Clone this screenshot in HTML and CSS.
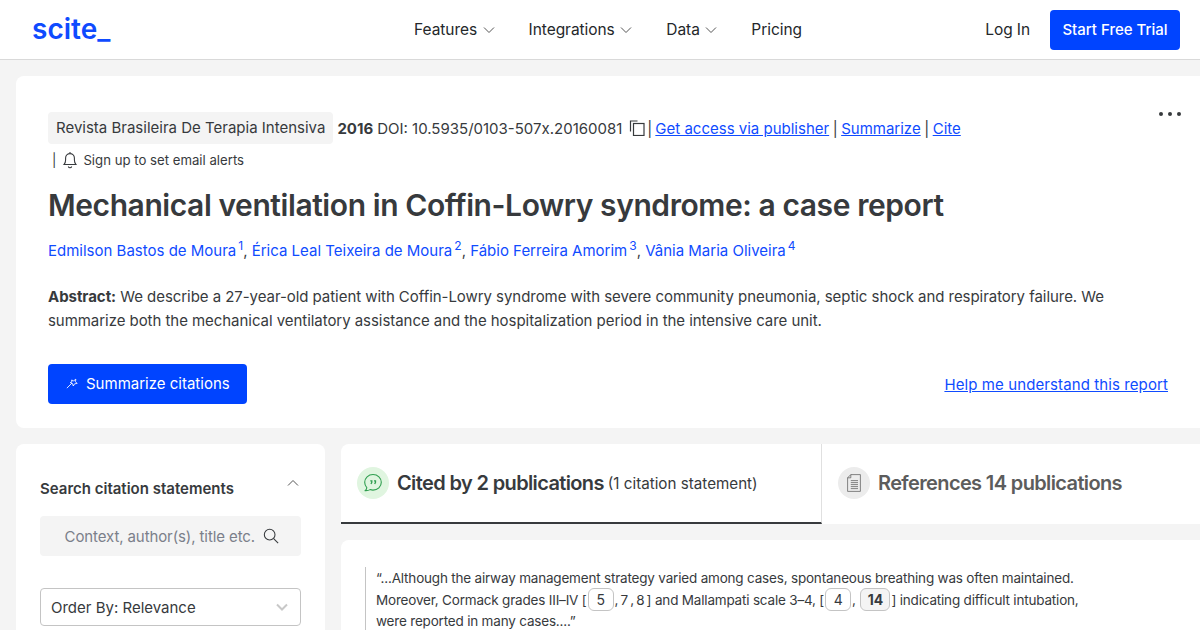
FILE: index.html
```html
<!DOCTYPE html>
<html lang="en">
<head>
  <meta charset="UTF-8">
  <title>Mechanical ventilation in Coffin-Lowry syndrome: a case report</title>
  <link rel="stylesheet" href="styles.css">
</head>
<body>

<header class="topbar">
  <a class="logo">scite_</a>
  <nav class="nav">
    <a class="nav-item">Features <svg class="caret" viewBox="0 0 12 8"><path d="M1 1.5 6 6.5 11 1.5"/></svg></a>
    <a class="nav-item">Integrations <svg class="caret" viewBox="0 0 12 8"><path d="M1 1.5 6 6.5 11 1.5"/></svg></a>
    <a class="nav-item">Data <svg class="caret" viewBox="0 0 12 8"><path d="M1 1.5 6 6.5 11 1.5"/></svg></a>
    <a class="nav-item">Pricing</a>
  </nav>
  <div class="auth">
    <a class="login">Log In</a>
    <a class="trial">Start Free Trial</a>
  </div>
</header>

<main class="page">
  <section class="report card">
    <div class="more"><i></i><i></i><i></i></div>
    <div class="meta">
      <span class="journal">Revista Brasileira De Terapia Intensiva</span>
      <b class="year">2016</b>
      <span class="doi">DOI: 10.5935/0103-507x.20160081</span>
      <svg class="copy" viewBox="0 0 16 16"><path d="M8.5 1H1.5V11.500"/><rect x="4.500" y="3.500" width="10.500" height="12"/></svg>
      <span class="sep">|</span>
      <a class="link">Get access via publisher</a>
      <span class="sep">|</span>
      <a class="link">Summarize</a>
      <span class="sep">|</span>
      <a class="link">Cite</a>
    </div>
    <div class="alerts">
      <span class="sep">|</span>
      <svg class="bell" viewBox="0 0 16 18"><path d="M2 13.500c1.200-1.300 1.600-2.500 1.600-4.500V7a4.400 4.400 0 0 1 8.800 0v2c0 2 .4 3.200 1.600 4.500zM6.300 15.500a1.800 1.800 0 0 0 3.400 0M8 1v1.500"/></svg>
      <span>Sign up to set email alerts</span>
    </div>
    <h1 class="title">Mechanical ventilation in Coffin-Lowry syndrome: a case report</h1>
    <div class="authors">
      <a>Edmilson Bastos de Moura<sup>1</sup></a>, <a>Érica Leal Teixeira de Moura<sup>2</sup></a>, <a>Fábio Ferreira Amorim<sup>3</sup></a>, <a>Vânia Maria Oliveira<sup>4</sup></a>
    </div>
    <p class="abstract"><b>Abstract:</b> We describe a 27-year-old patient with Coffin-Lowry syndrome with severe community pneumonia, septic shock and respiratory failure. We summarize both the mechanical ventilatory assistance and the hospitalization period in the intensive care unit.</p>
    <div class="report-foot">
      <a class="summarize">
        <svg class="wand" viewBox="0 0 14 14"><path d="M1 13 7 7M6.500 3.500 9 4.500 11.500 2.500 11 5.500 13 7.500 10 8 8.500 10.500 7.500 7.500 5 6.500 7 5.500z"/></svg>
        Summarize citations
      </a>
      <a class="link help">Help me understand this report</a>
    </div>
  </section>

  <div class="columns">
    <aside class="sidebar card">
      <div class="side-head">
        <h3>Search citation statements</h3>
        <svg class="caret up" viewBox="0 0 12 8"><path d="M1 6.500 6 1.500 11 6.500"/></svg>
      </div>
      <div class="search">
        <span>Context, author(s), title etc.</span>
        <svg class="search-icon" viewBox="0 0 18 18"><circle cx="7.500" cy="7.500" r="6"/><path d="M12 12 17 17"/></svg>
      </div>
      <div class="order">
        <span>Order By: Relevance</span>
        <svg class="order-caret" viewBox="0 0 12 8"><path d="M1 1.500 6 6.500 11 1.500"/></svg>
      </div>
    </aside>

    <div class="results">
      <div class="tabs">
        <div class="tab active">
          <span class="tab-icon green">
            <svg viewBox="0 0 20 20"><path d="M10 1.500c4.700 0 8.300 3.500 8.300 7.800s-3.600 7.800-8.300 7.800c-1 0-2-.2-2.900-.5-1.300.8-3 1.100-4.800 1 .8-.8 1.400-1.800 1.500-2.900-1.300-1.300-2.100-3.300-2.100-5.400 0-4.300 3.600-7.800 8.300-7.800z"/><path class="q" d="M7.300 7.800h1.500v1.500l-.8 1.700M11 7.800h1.500v1.500l-.8 1.700"/></svg>
          </span>
          <span class="tab-label">Cited by 2 publications</span>
          <span class="tab-note">(1 citation statement)</span>
        </div>
        <div class="tab">
          <span class="tab-icon grey">
            <svg viewBox="0 0 20 24"><path d="M6 1.500h12v21H2V5.500zM6 1.500v4H2"/><path d="M6 9h9M6 11.500h9M6 14h9M6 16.500h9M6 19h9"/></svg>
          </span>
          <span class="tab-label muted">References 14 publications</span>
        </div>
      </div>
      <div class="statement card">
        <blockquote class="quote">“...Although the airway management strategy varied among cases, spontaneous breathing was often maintained. Moreover, Cormack grades III–IV [<span class="ref">5</span>,&#8201;7&#8201;,&#8201;8&#8201;] and Mallampati scale 3–4, [<span class="ref">4</span>, <span class="ref bold">14</span>] indicating difficult intubation, were reported in many cases....”</blockquote>
      </div>
    </div>
  </div>
</main>

</body>
</html>
```

FILE: styles.css
```css
html, body {
  margin: 0;
  padding: 0;
  height: 630px;
  overflow: hidden;
}
body {
  font-family: Inter, "Liberation Sans", sans-serif;
  color: #373a3d;
  background-color: #f4f4f4;
}
a {
  cursor: pointer;
}
sup {
  font-size: 12px;
  line-height: 0;
  margin-left: 2px;
}

/* Top bar */
.topbar {
  height: 59px;
  background-color: #fff;
  border-bottom: 1px solid #d9d9d9;
  display: flex;
  align-items: center;
  padding: 0 20px 0 32px;
}
.logo {
  font-size: 28px;
  font-weight: 600;
  color: #0f4bff;
  width: 382px;
  margin-bottom: 2px;
}
.nav {
  display: flex;
  gap: 34px;
  flex: 1;
}
.nav-item {
  font-size: 15.5px;
  letter-spacing: -0.05px;
  color: #24272a;
  display: flex;
  align-items: center;
  gap: 5.5px;
}
.caret {
  width: 12px;
  height: 8px;
  fill: none;
  stroke: #555;
  stroke-width: 1;
}
.auth {
  display: flex;
  align-items: center;
  gap: 20px;
}
.login {
  font-size: 15.5px;
  letter-spacing: -0.1px;
  color: #24272a;
}
.trial {
  background-color: #0044ff;
  color: #fff;
  font-size: 15px;
  font-weight: 500;
  width: 130px;
  text-align: center;
  height: 40px;
  line-height: 40px;
  border-radius: 4px;
}

/* Cards */
.page {
  padding: 16px 0 0 16px;
}
.card {
  background-color: #fff;
  border-radius: 8px 0 0 8px;
}
.report {
  position: relative;
  height: 352px;
  box-sizing: border-box;
  padding: 36px 32px 0;
}
.more {
  position: absolute;
  top: 36px;
  right: 19px;
  display: flex;
  gap: 5px;
}
.more i {
  width: 4px;
  height: 4px;
  border-radius: 50%;
  background-color: #373a3d;
}
.meta {
  display: flex;
  align-items: center;
  font-size: 15px;
  height: 32px;
  white-space: nowrap;
}
.journal {
  background-color: #f4f4f4;
  border-radius: 4px;
  height: 32px;
  line-height: 32px;
  padding: 0 8px;
  margin-right: 4px;
}
.year {
  margin-right: 4px;
}
.copy {
  width: 16px;
  height: 16px;
  margin-left: 7px;
  fill: none;
  stroke: #373a3d;
  stroke-width: 1.2;
}
.sep {
  margin: 0 3.5px;
}
.meta .copy + .sep {
  margin: 0 3px 0 2px;
}
.link {
  color: #0f4bff;
  text-decoration: underline;
}
.alerts {
  display: flex;
  align-items: center;
  height: 32px;
  font-size: 13.2px;
  padding-left: 4px;
}
.alerts .sep {
  margin: 0 6px 0 0;
}
.bell {
  width: 16px;
  height: 18px;
  margin-right: 5px;
  fill: none;
  stroke: #373a3d;
  stroke-width: 1.1;
}
.title {
  margin: 10px 0 0;
  font-size: 30px;
  line-height: 38px;
  font-weight: 600;
  letter-spacing: -0.42px;
}
.authors {
  margin-top: 15px;
  font-size: 15px;
  line-height: 24px;
  color: #373a3d;
}
.authors a {
  color: #0f4bff;
}
.abstract {
  margin: 22px 0 0;
  font-size: 15px;
  line-height: 24px;
  letter-spacing: -0.05px;
  max-width: 1090px;
}
.report-foot {
  margin-top: 31px;
  display: flex;
  justify-content: space-between;
  align-items: center;
}
.summarize {
  background-color: #0044ff;
  color: #fff;
  height: 40px;
  width: 199px;
  box-sizing: border-box;
  border-radius: 4px;
  font-size: 15px;
  display: flex;
  align-items: center;
  padding: 0 0 2px 18px;
  gap: 8px;
}
.wand {
  width: 12px;
  height: 12px;
  fill: none;
  stroke: #fff;
  stroke-width: 1;
}
.help {
  font-size: 15px;
  letter-spacing: 0.1px;
}

/* Lower columns */
.columns {
  display: flex;
  gap: 16px;
  margin-top: 16px;
}
.sidebar {
  width: 309px;
  flex: none;
  border-radius: 8px;
  box-sizing: border-box;
  height: 300px;
  padding: 32px 24px;
}
.side-head {
  display: flex;
  justify-content: space-between;
  align-items: flex-start;
}
.side-head h3 {
  margin: 1px 0 -1px;
  font-size: 15px;
  line-height: 24px;
  font-weight: 600;
}
.up {
  margin: 3px 2px 0 0;
}
.search {
  margin-top: 16px;
  height: 40px;
  background-color: #f4f4f4;
  border-radius: 4px;
  display: flex;
  align-items: center;
  justify-content: flex-end;
  gap: 8px;
  padding-right: 22px;
  font-size: 15px;
  letter-spacing: -0.1px;
  color: #7b7f8a;
}
.search-icon {
  width: 16px;
  height: 16px;
  fill: none;
  stroke: #373a3d;
  stroke-width: 1.2;
}
.order {
  margin-top: 32px;
  height: 38px;
  box-sizing: border-box;
  border: 1px solid #c4c4c4;
  border-radius: 4px;
  display: flex;
  align-items: center;
  justify-content: space-between;
  padding: 0 12px 0 10px;
  font-size: 15px;
}
.order-caret {
  width: 12px;
  height: 8px;
  fill: none;
  stroke: #c8c8c8;
  stroke-width: 2;
}
.results {
  flex: 1;
  min-width: 0;
}
.tabs {
  display: flex;
  height: 80px;
  background-color: #fff;
  border-radius: 8px 0 0 0;
}
.tab {
  box-sizing: border-box;
  display: flex;
  align-items: center;
  padding-left: 16px;
  gap: 8px;
  flex: 1;
  height: 80px;
  border-bottom: 2px solid transparent;
}
.tab.active {
  flex: none;
  width: 481px;
  border-right: 1px solid #e0e0e0;
  border-bottom-color: #373a3d;
}
.tab-icon {
  width: 32px;
  height: 32px;
  border-radius: 50%;
  display: flex;
  align-items: center;
  justify-content: center;
}
.tab-icon.green {
  background-color: #e0f5e0;
}
.tab-icon.grey {
  background-color: #ececec;
}
.tab-icon.green svg {
  width: 20px;
  height: 20px;
  fill: none;
  stroke: #2f9e4f;
  stroke-width: 1.1;
}
.tab-icon.green .q {
  stroke-width: 1.3;
}
.tab-icon.grey svg {
  width: 16px;
  height: 20px;
  fill: none;
  stroke: #666;
  stroke-width: 1;
}
.tab-label {
  font-size: 20px;
  font-weight: 600;
  letter-spacing: -0.63px;
}
.tab-label.muted {
  color: #5c5c5c;
}
.tab-note {
  font-size: 15.2px;
  margin-left: -4px;
}
.statement {
  margin-top: 16px;
  height: 120px;
  box-sizing: border-box;
  padding: 27px 24px 0;
}
.quote {
  margin: 0;
  border-left: 1px solid #c4c4c4;
  padding: 1px 0 0 10px;
  font-size: 13.5px;
  line-height: 21px;
  letter-spacing: -0.19px;
  width: 712px;
  height: 80px;
}
.ref {
  display: inline-block;
  width: 24px;
  height: 21px;
  line-height: 21px;
  margin: -1px 1px;
  text-align: center;
  border: 1px solid #c4c4c4;
  border-radius: 6px;
  font-size: 14px;
}
.ref.bold {
  width: 28px;
  font-weight: 700;
  background-color: #f4f4f4;
}
```
